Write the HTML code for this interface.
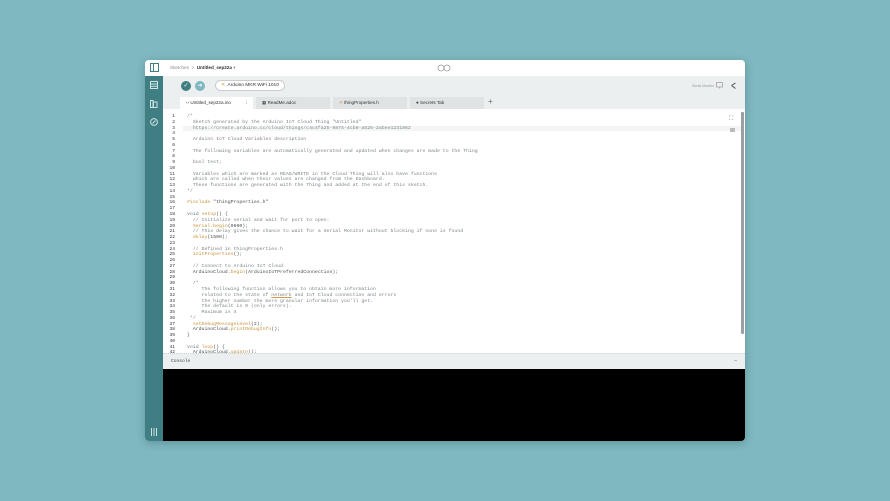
<!DOCTYPE html>
<html><head><meta charset="utf-8"><style>
*{margin:0;padding:0;box-sizing:border-box}
body{width:890px;height:501px;background:#7fb8c0;position:relative;overflow:hidden;font-family:"Liberation Sans",sans-serif}
.win{position:absolute;left:145px;top:60px;width:600px;height:381px;background:#fff;border-radius:4px;overflow:hidden;box-shadow:0 2px 8px rgba(40,80,85,.35)}
.top{position:absolute;left:0;top:0;width:600px;height:16px;background:#fff}
.side{position:absolute;left:0;top:16px;width:18px;height:365px;background:#3f7e82}
.tool{position:absolute;left:18px;top:16px;width:582px;height:20px;background:#eceff0}
.tabs{position:absolute;left:18px;top:36px;width:582px;height:13px;background:#eceff0}
.tab{position:absolute;top:1px;height:12px;background:#dfe3e4;font-size:4.6px;color:#333;line-height:12px;padding-left:6px}
.ed{position:absolute;left:18px;top:49px;width:582px;height:244px;background:#fff;overflow:hidden}
.code{position:absolute;left:0;top:5px;font-family:"Liberation Mono",monospace;font-size:4.85px;line-height:5.76px;color:#4a4f52;white-space:pre}
.ln{position:absolute;left:0;top:5px;width:12px;text-align:right;font-family:"Liberation Mono",monospace;font-size:4.6px;line-height:5.76px;color:#333;white-space:pre}
.c{color:#7d8689}.o{color:#c8923a}.k{color:#6b7a80}
.con{position:absolute;left:18px;top:293px;width:582px;height:16px;background:#eceff0;border-top:1px dotted #d0d5d6;font-family:"Liberation Mono",monospace;font-size:4.6px;color:#444;line-height:16px;padding-left:8px}
.blk{position:absolute;left:18px;top:309px;width:582px;height:72px;background:#000}
</style></head><body>
<div class="win">
 <div class="top">
  <svg style="position:absolute;left:5px;top:3px" width="9" height="9"><rect x="0.5" y="0.5" width="8" height="8" fill="none" stroke="#3f7e82"/><line x1="3.5" y1="0.5" x2="3.5" y2="8.5" stroke="#3f7e82"/></svg>
  <span style="position:absolute;left:25px;top:5px;font-size:4.6px;color:#888">Sketches &nbsp;&gt;&nbsp; <b style="color:#333">Untitled_sep22a</b> ▾</span>
  <svg style="position:absolute;left:292px;top:4px" width="14" height="8"><circle cx="4" cy="4" r="3" fill="none" stroke="#999" stroke-width=".8"/><circle cx="10" cy="4" r="3" fill="none" stroke="#999" stroke-width=".8"/></svg>
 </div>
 <div class="side">
  <svg style="position:absolute;left:5px;top:5px" width="8" height="8"><rect x=".5" y=".5" width="7" height="7" fill="none" stroke="#cfe3e4"/><line x1=".5" y1="3" x2="7.5" y2="3" stroke="#cfe3e4"/><line x1=".5" y1="5.3" x2="7.5" y2="5.3" stroke="#cfe3e4"/></svg>
  <svg style="position:absolute;left:5px;top:24px" width="8" height="8"><rect x=".5" y=".5" width="2.5" height="7" fill="none" stroke="#cfe3e4"/><rect x="3.5" y="2" width="3.5" height="5.5" fill="none" stroke="#cfe3e4"/></svg>
  <svg style="position:absolute;left:5px;top:42px" width="8" height="8"><circle cx="4" cy="4" r="3.4" fill="none" stroke="#cfe3e4"/><line x1="2.5" y1="5.5" x2="5.5" y2="2.5" stroke="#cfe3e4"/></svg>
  <svg style="position:absolute;left:5px;top:352px" width="8" height="8"><g stroke="#cfe3e4"><line x1="1.5" y1="0" x2="1.5" y2="8"/><line x1="4" y1="0" x2="4" y2="8"/><line x1="6.5" y1="0" x2="6.5" y2="8"/></g></svg>
 </div>
 <div class="tool">
  <div style="position:absolute;left:18px;top:5px;width:10px;height:10px;border-radius:50%;background:#3f7e82;color:#fff;font-size:6px;text-align:center;line-height:10px">✓</div>
  <div style="position:absolute;left:32px;top:5px;width:10px;height:10px;border-radius:50%;background:#7fb8c0;color:#fff;font-size:6px;text-align:center;line-height:10px">➔</div>
  <div style="position:absolute;left:52px;top:4px;width:70px;height:11px;border-radius:6px;background:#fff;border:.5px solid #ccc;font-size:4.8px;color:#333;line-height:10px;padding-left:5px"><span style="color:#d89a4a">✕</span>&nbsp; Arduino MKR WiFi 1010</div>
  <span style="position:absolute;left:529px;top:8px;font-size:3.6px;color:#999">Serial Monitor</span>
  <svg style="position:absolute;left:553px;top:6px" width="7" height="7"><rect x=".5" y=".5" width="6" height="4.5" fill="none" stroke="#999" stroke-width=".7"/><line x1="3.5" y1="5" x2="3.5" y2="6.5" stroke="#999" stroke-width=".7"/></svg>
  <svg style="position:absolute;left:567px;top:6px" width="7" height="8"><g stroke="#444" stroke-width=".8" fill="none"><line x1="5.5" y1="1" x2="1.5" y2="3.5"/><line x1="1.5" y1="3.5" x2="5.5" y2="6.5"/></g></svg>
 </div>
 <div class="tabs">
  <div class="tab" style="left:17px;width:73px;background:#fff">‹› Untitled_sep22a.ino<span style="position:absolute;right:4px">⋮</span></div>
  <div class="tab" style="left:93px;width:74px">▦ ReadMe.adoc</div>
  <div class="tab" style="left:170px;width:74px"><span style="color:#d89a4a">✕</span> thingProperties.h</div>
  <div class="tab" style="left:247px;width:74px">● Secrets Tab</div>
  <span style="position:absolute;left:325px;top:1px;font-size:8px;color:#666">+</span>
 </div>
 <div class="ed">
  <div style="position:absolute;left:20px;top:16.5px;width:558px;height:5.8px;background:#f3f5f5"></div>
  <div style="position:absolute;left:578px;top:3px;width:2.5px;height:222px;background:#9aa0a3;border-radius:1px"></div>
  <div style="position:absolute;left:566px;top:7px;font-size:6px;color:#888">⛶</div>
  <div style="position:absolute;left:567px;top:19px;width:5px;height:4px;background:#bbb"></div>
<div class="ln">1
2
3
4
5
6
7
8
9
10
11
12
13
14
15
16
17
18
19
20
21
22
23
24
25
26
27
28
29
30
31
32
33
34
35
36
37
38
39
40
41
42</div>
<div class="code" style="left:24px"><span class="c">/*
  Sketch generated by the Arduino IoT Cloud Thing "Untitled"
  https://create.arduino.cc/cloud/things/c4c4fa25-9874-4cb8-a526-2abee1231862

  Arduino IoT Cloud Variables description

  The following variables are automatically generated and updated when changes are made to the Thing

  bool test;

  Variables which are marked as READ/WRITE in the Cloud Thing will also have functions
  which are called when their values are changed from the Dashboard.
  These functions are generated with the Thing and added at the end of this sketch.
*/</span>

<span class="o">#include</span> "thingProperties.h"

<span class="k">void</span> <span class="o">setup</span>() {
  <span class="c">// Initialize serial and wait for port to open:</span>
  <span class="o">Serial.begin</span>(9600);
  <span class="c">// This delay gives the chance to wait for a Serial Monitor without blocking if none is found</span>
  <span class="o">delay</span>(1500);

  <span class="c">// Defined in thingProperties.h</span>
  <span class="o">initProperties</span>();

  <span class="c">// Connect to Arduino IoT Cloud</span>
  ArduinoCloud.<span class="o">begin</span>(ArduinoIoTPreferredConnection);

  <span class="c">/*
     The following function allows you to obtain more information
     related to the state of <u style="text-decoration-color:#d89a4a">network</u> and IoT Cloud connection and errors
     the higher number the more granular information you'll get.
     The default is 0 (only errors).
     Maximum is 4
 */</span>
  <span class="o">setDebugMessageLevel</span>(2);
  ArduinoCloud.<span class="o">printDebugInfo</span>();
}

<span class="k">void</span> <span class="o">loop</span>() {
  ArduinoCloud.<span class="o">update</span>();</div>
 </div>
 <div class="con">Console<span style="position:absolute;right:8px;top:0">—</span></div>
 <div class="blk"></div>
</div>
</body></html>
